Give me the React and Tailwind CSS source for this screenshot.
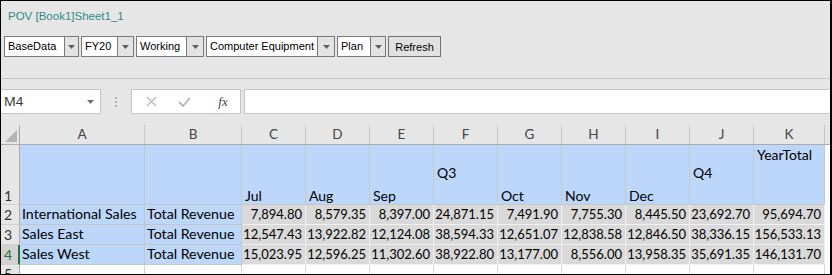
import React from "react";

const ui = { fontFamily: '"Liberation Sans", Arial, sans-serif' };
const cellFont = { fontFamily: 'Lato, "Open Sans", sans-serif' };

function Tri({ className = "fill-[#606060]" }) {
  return (
    <svg width="7" height="4" viewBox="0 0 7 4" className={className}>
      <polygon points="0,0 7,0 3.5,4" />
    </svg>
  );
}

const dropdowns = [
  { label: "BaseData", outer: "w-[75px]", inner: "w-[60px]" },
  { label: "FY20", outer: "w-[53px]", inner: "w-[36px]" },
  { label: "Working", outer: "w-[68px]", inner: "w-[50px]" },
  { label: "Computer Equipment", outer: "w-[129px]", inner: "w-[111px]" },
  { label: "Plan", outer: "w-[49px]", inner: "w-[33px]" },
];

const cols = [
  { l: "A", w: "w-[125px]" },
  { l: "B", w: "w-[97px]" },
  { l: "C", w: "w-[64px]" },
  { l: "D", w: "w-[64px]" },
  { l: "E", w: "w-[64px]" },
  { l: "F", w: "w-[64px]" },
  { l: "G", w: "w-[64px]" },
  { l: "H", w: "w-[64px]" },
  { l: "I", w: "w-[64px]" },
  { l: "J", w: "w-[64px]" },
  { l: "K", w: "w-[71px]" },
];

const headerRow = [
  { t: "", pos: "end" },
  { t: "", pos: "end" },
  { t: "Jul", pos: "end" },
  { t: "Aug", pos: "end" },
  { t: "Sep", pos: "end" },
  { t: "Q3", pos: "mid" },
  { t: "Oct", pos: "end" },
  { t: "Nov", pos: "end" },
  { t: "Dec", pos: "end" },
  { t: "Q4", pos: "mid" },
  { t: "YearTotal", pos: "top" },
];

const data = [
  ["International Sales", "Total Revenue", "7,894.80", "8,579.35", "8,397.00", "24,871.15", "7,491.90", "7,755.30", "8,445.50", "23,692.70", "95,694.70"],
  ["Sales East", "Total Revenue", "12,547.43", "13,922.82", "12,124.08", "38,594.33", "12,651.07", "12,838.58", "12,846.50", "38,336.15", "156,533.13"],
  ["Sales West", "Total Revenue", "15,023.95", "12,596.25", "11,302.60", "38,922.80", "13,177.00", "8,556.00", "13,958.35", "35,691.35", "146,131.70"],
];

export default function App() {
  return (
    <div className="w-[832px] h-[275px] overflow-hidden bg-[#e6e6e6] border-l border-t border-r-2 border-b border-black flex flex-col">
      {/* Ribbon */}
      <div className="h-[78px] shrink-0 border-b border-[#c6c6c6] flex flex-col" style={ui}>
        <div className="pt-[8px] pl-[7px] h-[24px] leading-[15px] text-[11.5px] text-[#2d8a86]">
          POV [Book1]Sheet1_1
        </div>
        <div className="mt-[11px] pl-[3px] flex gap-[2px] text-[11px] text-black">
          {dropdowns.map((d) => (
            <div key={d.label} className={`${d.outer} h-[21px] flex border border-[#7a7a7a]`}>
              <div className={`${d.inner} bg-white border-r border-[#7a7a7a] pl-[3px] flex items-center leading-none whitespace-nowrap overflow-hidden`}>
                {d.label}
              </div>
              <div className="flex-1 bg-[#e3e3e3] flex items-center justify-center">
                <Tri />
              </div>
            </div>
          ))}
          <div className="w-[53px] h-[21px] border border-[#707070] bg-[#e1e1e1] flex items-center justify-center pt-[1px] leading-none">
            Refresh
          </div>
        </div>
      </div>

      {/* Formula bar */}
      <div className="h-[46px] shrink-0 pt-[10px] flex items-start" style={ui}>
        <div className="w-[100px] h-[25px] bg-white border-y border-r border-[#c6c6c6] flex items-center justify-between pl-[3px] pr-[6px]">
          <span className="text-[13px] text-[#333] leading-none" style={{ fontFamily: '"Noto Sans", sans-serif' }}>M4</span>
          <Tri className="fill-[#707070]" />
        </div>
        <div className="w-[30px] h-[25px] flex flex-col items-center justify-center gap-[2px]">
          <span className="w-[2px] h-[2px] bg-[#b0b0b0]" />
          <span className="w-[2px] h-[2px] bg-[#b0b0b0]" />
          <span className="w-[2px] h-[2px] bg-[#b0b0b0]" />
        </div>
        <div className="w-[110px] h-[25px] bg-white border border-[#c6c6c6] flex items-center">
          <div className="w-[36px] flex justify-center pl-[2px]">
            <svg width="11" height="11" viewBox="0 0 11 11" className="stroke-[#b8b8b8]" strokeWidth="1.3" fill="none">
              <path d="M1 1 L10 10 M10 1 L1 10" />
            </svg>
          </div>
          <div className="w-[32px] flex justify-center">
            <svg width="13" height="10" viewBox="0 0 13 10" className="stroke-[#b8b8b8]" strokeWidth="1.8" fill="none">
              <path d="M1 5 L5 9 L12 1" />
            </svg>
          </div>
          <div className="flex-1 flex justify-center pl-[6px]">
            <span className="italic text-[13px] text-[#444] leading-none" style={{ fontFamily: '"Liberation Serif", serif' }}>
              fx
            </span>
          </div>
        </div>
        <div className="ml-[3px] flex-1 h-[25px] bg-white border-y border-l border-[#c6c6c6]" />
      </div>

      {/* Grid */}
      <div className="flex-1 flex flex-col text-[14px] text-black" style={cellFont}>
        {/* Column headers */}
        <div className="h-[20px] shrink-0 flex bg-[#e6e6e6] border-b border-[#ababab]">
          <div className="w-[19px] border-r border-[#ababab] relative">
            <svg width="12" height="12" viewBox="0 0 12 12" className="absolute right-[2px] bottom-[2px] fill-[#b4b4b4]">
              <polygon points="0,12 12,12 12,0" />
            </svg>
          </div>
          {cols.map((c) => (
            <div key={c.l} className={`${c.w} border-r border-[#c6c6c6] flex items-center justify-center text-[#444] leading-none text-[13.5px]`}>
              {c.l}
            </div>
          ))}
          <div className="flex-1" />
        </div>

        {/* Row 1 */}
        <div className="h-[60px] shrink-0 flex">
          <div className="w-[19px] bg-[#e6e6e6] border-r border-r-[#ababab] border-b border-b-[#d0d0d0] flex items-end pl-[3px] text-[#333] leading-[16px]">
            1
          </div>
          {headerRow.map((h, i) => (
            <div
              key={i}
              className={`${cols[i].w} bg-[#bdd7fa] border-r border-b border-[#c6c6c6] flex flex-col pl-[3px] leading-[16px] whitespace-nowrap ${
                h.pos === "end" ? "justify-end" : h.pos === "mid" ? "pt-[20px]" : "pt-[2px]"
              }`}
            >
              {h.t}
            </div>
          ))}
          <div className="flex-1 bg-white" />
        </div>

        {/* Data rows */}
        {data.map((row, r) => (
          <div key={r} className="h-[20px] shrink-0 flex">
            {r === 2 ? (
              <div className="w-[19px] bg-[#d2d2d2] border-r-2 border-r-[#217346] border-b border-b-[#d0d0d0] flex items-center pl-[3px] text-[#217346] leading-none">
                {r + 2}
              </div>
            ) : (
              <div className="w-[19px] bg-[#e6e6e6] border-r border-r-[#ababab] border-b border-b-[#d0d0d0] flex items-center pl-[3px] text-[#333] leading-none">
                {r + 2}
              </div>
            )}
            {row.map((v, i) =>
              i < 2 ? (
                <div key={i} className={`${cols[i].w} bg-[#bdd7fa] border-r border-b border-[#c6c6c6] flex items-center pl-[2px] leading-none whitespace-nowrap text-[14.2px]`}>
                  {v}
                </div>
              ) : (
                <div key={i} className={`${cols[i].w} bg-[#d9d9d9] border-r border-b border-[#f0f0f0] flex items-center justify-end pr-[3px] leading-none whitespace-nowrap text-[13px]`}>
                  {v}
                </div>
              )
            )}
            <div className="flex-1 bg-white" />
          </div>
        ))}

        {/* Row 5 (partial) */}
        <div className="h-[20px] shrink-0 flex">
          <div className="w-[19px] bg-[#e6e6e6] border-r border-[#ababab] flex items-start pt-[2px] pl-[3px] text-[#333] leading-none">
            5
          </div>
          {cols.map((c) => (
            <div key={c.l} className={`${c.w} bg-white border-r border-[#d4d4d4]`} />
          ))}
          <div className="flex-1 bg-white" />
        </div>
      </div>
    </div>
  );
}
